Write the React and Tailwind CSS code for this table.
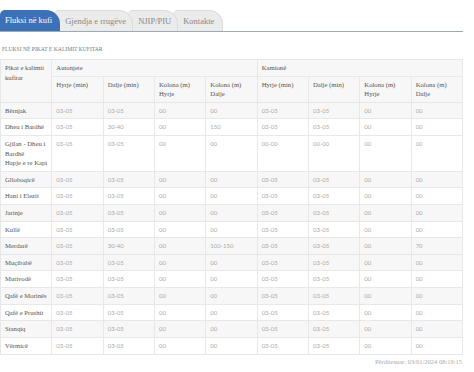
import React from "react";

const rows = [
  ["Bërnjak", "03-05", "03-05", "00", "00", "03-05", "03-05", "00", "00", true],
  ["Dheu i Bardhë", "03-05", "30-40", "00", "150", "03-05", "03-05", "00", "00", false],
  ["Gjilan - Dheu i Bardhë Hapje e re Kapi", "03-05", "03-05", "00", "00", "00-00", "00-00", "00", "00", false],
  ["Glloboqicë", "03-05", "03-05", "00", "00", "03-05", "03-05", "00", "00", true],
  ["Hani i Elezit", "03-05", "03-05", "00", "00", "03-05", "03-05", "00", "00", false],
  ["Jarinje", "03-05", "03-05", "00", "00", "03-05", "03-05", "00", "00", true],
  ["Kullë", "03-05", "03-05", "00", "00", "03-05", "03-05", "00", "00", false],
  ["Merdarë", "03-05", "30-40", "00", "100-150", "03-05", "03-05", "00", "70", true],
  ["Muçibabë", "03-05", "03-05", "00", "00", "03-05", "03-05", "00", "00", true],
  ["Mutivodë", "03-05", "03-05", "00", "00", "03-05", "03-05", "00", "00", false],
  ["Qafë e Morinës", "03-05", "03-05", "00", "00", "03-05", "03-05", "00", "00", true],
  ["Qafë e Prushit", "03-05", "03-05", "00", "00", "03-05", "03-05", "00", "00", false],
  ["Stanqiq", "03-05", "03-05", "00", "00", "03-05", "03-05", "00", "00", true],
  ["Vërmicë", "03-05", "03-05", "00", "00", "03-05", "03-05", "00", "00", false],
];

const serif = "font-['Liberation_Serif',serif]";

export default function App() {
  return (
    <div className="w-[474px] h-[372px] bg-white overflow-hidden">
      <div className="w-[463px]">
        {/* tabs */}
        <div className="pt-[10px] flex items-end border-b-[1.5px] border-[#9babb5]">
          <div className={`relative z-40 h-[21px] pl-[5px] pr-[8px] flex items-center rounded-tl-[5px] rounded-tr-[14px] bg-[#3c71b8] text-white text-[8.5px] ${serif}`}>
            Fluksi në kufi
          </div>
          <div className={`relative z-30 -ml-[6px] h-[21px] pl-[11px] pr-[6px] flex items-center rounded-tl-[5px] rounded-tr-[14px] bg-[#ebebeb] border-t border-r border-[#dcdcdc] text-[#888] text-[8.5px] ${serif}`}>
            Gjendja e rrugëve
          </div>
          <div className={`relative z-20 -ml-[5px] h-[21px] pl-[10px] pr-[6px] flex items-center rounded-tl-[5px] rounded-tr-[14px] bg-[#ebebeb] border-t border-r border-[#dcdcdc] text-[#888] text-[8.5px] ${serif}`}>
            NJIP/PIU
          </div>
          <div className={`relative z-10 -ml-[5px] h-[21px] pl-[10px] pr-[8px] flex items-center rounded-tl-[5px] rounded-tr-[14px] bg-[#ebebeb] border-t border-r border-[#dcdcdc] text-[#888] text-[8.5px] ${serif}`}>
            Kontakte
          </div>
        </div>

        {/* title */}
        <div className={`mt-[12px] pl-[2px] leading-[10px] text-[5.6px] text-[#777] uppercase ${serif}`}>
          Fluksi në pikat e kalimit kufitar
        </div>

        {/* table */}
        <table className="mt-[5px] w-[463px] table-fixed border-collapse">
          <thead>
            <tr className="bg-[#f7f7f7]">
              <th rowSpan={2} className={`align-top text-left font-normal border border-[#e8e8e8] pl-[4px] pr-[1px] py-[3.07px] leading-[9.5px] text-[6.7px] text-[#555] ${serif}`}>
                Pikat e kalimit kufitar
              </th>
              <th colSpan={4} className={`align-top text-left font-normal border border-[#e8e8e8] pl-[4px] pr-[1px] py-[3.07px] leading-[9.5px] text-[6.7px] text-[#555] ${serif}`}>
                Autonjete
              </th>
              <th colSpan={4} className={`align-top text-left font-normal border border-[#e8e8e8] pl-[4px] pr-[1px] py-[3.07px] leading-[9.5px] text-[6.7px] text-[#555] ${serif}`}>
                Kamionë
              </th>
            </tr>
            <tr className="bg-[#f7f7f7]">
              {["Hyrje (min)", "Dalje (min)", "Kolona (m) Hyrje", "Kolona (m) Dalje", "Hyrje (min)", "Dalje (min)", "Kolona (m) Hyrje", "Kolona (m) Dalje"].map((h, i) => (
                <th key={i} className={`align-top text-left font-normal border border-[#e8e8e8] pl-[4px] pr-[1px] py-[3.07px] leading-[9.5px] text-[6.7px] text-[#555] ${serif}`}>
                  {h.startsWith("Kolona") ? (
                    <>
                      Kolona (m)
                      <br />
                      {h.slice(11)}
                    </>
                  ) : (
                    h
                  )}
                </th>
              ))}
            </tr>
          </thead>
          <tbody>
            {rows.map((r, i) => (
              <tr key={i} className={r[9] ? "bg-[#f7f7f7]" : "bg-white"}>
                <td className={`align-top border border-[#e8e8e8] pl-[4px] pr-[1px] py-[3.07px] leading-[9.5px] text-[6.7px] text-[#555] ${serif}`}>
                  {i === 2 ? (
                    <>
                      Gjilan - Dheu i
                      <br />
                      Bardhë
                      <br />
                      Hapje e re Kapi
                    </>
                  ) : (
                    <span className="whitespace-nowrap">{r[0]}</span>
                  )}
                </td>
                {r.slice(1, 9).map((v, j) => (
                  <td key={j} className="align-top border border-[#e8e8e8] pl-[4px] pr-[1px] py-[3.07px] leading-[9.5px] text-[6px] text-[#aaa] font-['Lato',sans-serif]">
                    {v}
                  </td>
                ))}
              </tr>
            ))}
          </tbody>
        </table>

        <div className={`mt-[2px] text-right pr-[1px] leading-[10px] text-[6.5px] text-[#aaa] ${serif}`}>
          Përditesuar: 03/01/2024 08:19:15
        </div>
      </div>
    </div>
  );
}
